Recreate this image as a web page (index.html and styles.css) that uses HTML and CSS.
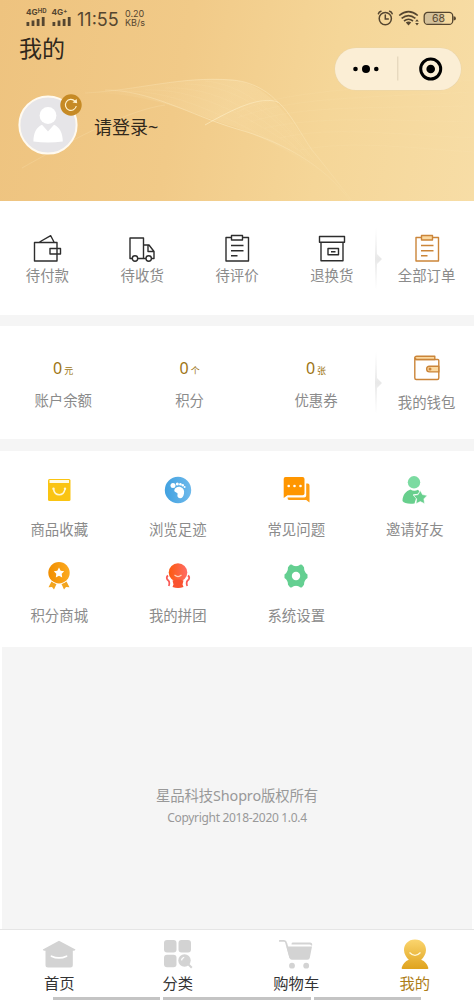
FILE: index.html
```html
<!DOCTYPE html>
<html lang="zh-CN">
<head>
<meta charset="utf-8">
<title>我的</title>
<link rel="stylesheet" href="styles.css">
</head>
<body>
<div class="app">
  <header class="hero">
    <svg class="hero-mesh" viewBox="0 0 474 201" fill="none">
      <defs>
        <linearGradient id="veil" x1="0" y1="0" x2="1" y2="0.3"><stop offset="0" stop-color="#fff0c8" stop-opacity="0"/><stop offset=".55" stop-color="#fff0c8" stop-opacity=".2"/><stop offset="1" stop-color="#fff0c8" stop-opacity="0"/></linearGradient>
        <linearGradient id="strand" gradientUnits="userSpaceOnUse" x1="70" y1="90" x2="350" y2="200"><stop stop-color="#fff3cf" stop-opacity=".2"/><stop offset=".5" stop-color="#fff3cf"/><stop offset="1" stop-color="#fff3cf" stop-opacity=".1"/></linearGradient>
      </defs>
      <path d="M85 93C140 90 180 76 232 80C270 84 290 120 312 150C322 166 336 180 350 201C310 160 270 140 235 127C190 113 150 92 85 93Z" fill="url(#veil)"/>
      <g stroke="url(#strand)" stroke-width="1">
        <path opacity=".4" d="M85 93C140 90 180 76 232 80C258 82 275 98 278 103"/>
        <path opacity=".45" d="M105 90C150 90 190 115 237 129C280 141 325 165 350 201"/>
        <path opacity=".55" d="M205 125C235 108 260 96 278 102C290 112 302 136 312 150C325 166 336 180 352 201"/>
      </g>
      <g stroke="#fff3cf" stroke-width=".7">
        <path opacity=".25" d="M22 168C80 135 130 110 165 105"/>
        <path opacity=".11" d="M120 91C170 90 210 108 290 150M145 90C190 88 240 110 298 150M165 88C215 86 260 112 305 156M185 84C230 84 270 108 309 156M205 81C245 84 280 116 314 160M237 112C280 92 340 90 474 80M237 118C290 98 350 98 474 92M250 122C300 106 360 108 474 106M265 128C320 116 380 120 474 122M280 138C330 126 390 134 474 138M300 150C350 140 410 148 474 152"/>
      </g>
    </svg>
    <div class="status">
      <div class="sim"><span class="sim-name">4G<sup>HD</sup></span><svg width="20" height="9" viewBox="0 0 20 9"><path d="M.5 5h2.800v4H.5zM5.600 3.500h2.800V9H5.600zM10.700 2h2.800v7h-2.800zM15.800 0h2.800v9h-2.800z" fill="#554630"/></svg></div>
      <div class="sim"><span class="sim-name">4G<sup>+</sup></span><svg width="20" height="9" viewBox="0 0 20 9"><path d="M.5 5h2.800v4H.5zM5.600 3.500h2.800V9H5.600zM10.700 2h2.800v7h-2.800zM15.800 0h2.800v9h-2.800z" fill="#554630"/></svg></div>
      <span class="clock">11:55</span>
      <span class="speed">0.20<br>KB/s</span>
      <svg class="status-icons" width="80" height="18" viewBox="0 0 80 18" fill="none" stroke="#554630">
        <g stroke-width="1.500" stroke-linecap="round"><circle cx="8.300" cy="9.600" r="6.100"/><path d="M8.300 6v4h3M1.400 4.700Q2 2.700 4 2.200M15.200 4.700Q14.600 2.700 12.600 2.200"/></g>
        <g stroke-width="1.600"><path d="M22.200 6.500Q31.500-1.200 40.800 6.500M24.600 9.400Q31.500 3.800 38.400 9.400M27 12Q31.500 8.600 36 12"/></g>
        <path d="M28.800 13.500Q31.500 11.700 34.200 13.500L31.500 16.500zM40 10.200l1.800 2.400h-3.600zM40 16.500l1.800-2.400h-3.600z" fill="#554630" stroke="none"/>
        <rect x="48" y="4" width="18" height="11" rx="3" fill="#d3c09a" stroke="none"/>
        <rect x="47.200" y="3.400" width="28.500" height="12" rx="3.500" stroke-width="1.300"/><path d="M76.500 7.300Q79 7.300 79 9.400T76.500 11.500z" fill="#554630" stroke="none"/>
        <text x="61.500" y="13.100" class="battery-text">68</text>
      </svg>
    </div>
    <div class="title-row">
      <h1>我的</h1>
      <div class="capsule">
        <svg width="126" height="42" viewBox="0 0 126 42"><circle cx="20.500" cy="21" r="2.300"/><circle cx="31" cy="21" r="4"/><circle cx="41.300" cy="21" r="2.300"/><path d="M62.800 8.500v24" stroke="#dfd1b6"/><circle cx="95.700" cy="21" r="10" fill="none" stroke="#000" stroke-width="3"/><circle cx="95.700" cy="21" r="4.300"/></svg>
      </div>
    </div>
    <div class="user">
      <div class="avatar">
        <svg width="60" height="60" viewBox="0 0 60 60"><circle cx="30" cy="30" r="28.600" fill="#e6e5e8" stroke="#fffaf0" stroke-width="2"/><circle cx="30" cy="20.500" r="8.400" fill="#fff"/><path d="M15.400 46.500C15.400 38 18.500 32 24 29.700L30 36.500L36 29.700C41.500 32 44.800 38 44.800 46.500Q30 48.500 15.400 46.500z" fill="#fff"/></svg>
        <svg class="refresh" width="22" height="22" viewBox="0 0 22 22"><circle cx="11" cy="11" r="10.700" fill="#c68a25"/><path d="M16.300 12A5.500 5.500 0 1 1 14.900 7.100" fill="none" stroke="#fff2cd" stroke-width="1.200"/><path d="M12.500 8.500l4.700.7L16.600 5z" fill="#fff2cd"/></svg>
      </div>
      <span class="login">请登录~</span>
    </div>
  </header>

  <section class="panel orders">
    <a class="cell"><svg class="line-icon" viewBox="0 0 30 30"><path d="M2.500 9.500h22.500v18.500h-22.500zM7.500 9L18.700 2.700L22 9M25 22.500v5.500M18 15.500h10.500v5.500H18z"/></svg><span>待付款</span></a>
    <a class="cell"><svg class="line-icon" viewBox="0 0 30 30"><path d="M5 25.500H3V5h13.500v20.500H11M16.500 12H22l5 6.500v7h-2.500M16.500 25.500H19M21 12.500v6h6"/><circle cx="8" cy="25.500" r="2.700"/><circle cx="21.700" cy="25.500" r="2.700"/></svg><span>待收货</span></a>
    <a class="cell"><svg class="line-icon" viewBox="0 0 30 30"><path d="M9 4.500H4v23.500h22.500v-23.500H21M9.500 2.500h11V7h-11zM9 12.500h12.500M9 17.700h12.500M9 22.800h6.500"/></svg><span>待评价</span></a>
    <a class="cell"><svg class="line-icon" viewBox="0 0 30 30"><path d="M2.500 3.500h25v5.700h-25zM4 9.200v18.500h22v-18.500M11 15.500h10.500v6.300H11zM14 18.700h4.500"/></svg><span>退换货</span></a>
    <a class="cell last"><svg class="divider" viewBox="0 0 8 62"><path d="M0 0h2v26l5 5-5 5v26H0z" fill="url(#edge)"/></svg><svg class="line-icon gold" viewBox="0 0 30 30"><path d="M9 4.500H4v23.500h22.500v-23.500H21M9 12.500h12.500M9 17.700h12.500M9 22.800h6.500"/><path d="M9.500 2.500h11V7h-11z" fill="#fbd9a0"/></svg><span>全部订单</span></a>
  </section>

  <section class="panel wallet">
    <a class="cell"><b>0<small>元</small></b><span>账户余额</span></a>
    <a class="cell"><b>0<small>个</small></b><span>积分</span></a>
    <a class="cell"><b>0<small>张</small></b><span>优惠券</span></a>
    <a class="cell last"><svg class="divider" viewBox="0 0 8 62"><defs><linearGradient id="edge" x1="0" y1="0" x2="0" y2="1"><stop stop-color="#eee" stop-opacity="0"/><stop offset=".5" stop-color="#e8e8e8"/><stop offset="1" stop-color="#eee" stop-opacity="0"/></linearGradient></defs><path d="M0 0h2v26l5 5-5 5v26H0z" fill="url(#edge)"/></svg><svg class="line-icon gold" viewBox="0 0 30 30"><path d="M2.800 6.500V27q0 1.500 1.500 1.500h21q1.500 0 1.500-1.500V9.500q0-1-1-1H4.500q-1.700 0-1.700-2"/><path d="M2.800 7q0-1.800 2-1.800h18v3.300H4.500z" fill="#fbd9a0"/><path d="M26.800 15.200H17.500a2.800 2.800 0 0 0 0 5.700h9.300z" fill="#fbd9a0"/><circle cx="18" cy="18" r=".8"/></svg><span>我的钱包</span></a>
  </section>

  <section class="panel services">
    <a class="cell"><svg viewBox="0 0 30 30"><rect x="4" y="4" width="22.500" height="22" rx="1.500" fill="#fac412"/><path d="M5.500 5h19.500v3H5.500z" fill="#fffbe5"/><path d="M9.500 14q1 5.800 5.700 5.800T21 14" fill="none" stroke="#fff7d5" stroke-width="1.500"/><circle cx="9.500" cy="13.700" r="1.200" fill="#fff7d5"/><circle cx="21" cy="13.700" r="1.200" fill="#fff7d5"/></svg><span>商品收藏</span></a>
    <a class="cell"><svg viewBox="0 0 30 30"><defs><linearGradient id="blue"><stop stop-color="#41a1e0"/><stop offset="1" stop-color="#6eb9eb"/></linearGradient></defs><circle cx="15" cy="15" r="13.200" fill="url(#blue)"/><g fill="#fff"><circle cx="10" cy="10.600" r="2.500"/><circle cx="14.300" cy="9" r="1.500"/><circle cx="17.400" cy="9.200" r="1.300"/><circle cx="19.800" cy="10.300" r="1.200"/><circle cx="21.600" cy="12" r="1"/><path d="M11.300 15.500C11.500 12.500 15 11.300 17.500 12C20.500 13 21.600 15.500 21 18.500C20.500 21.500 19 23.400 17 23.200C14.500 23 14 20.800 14.600 19C15 17.200 11.500 17.700 11.300 15.500z"/></g></svg><span>浏览足迹</span></a>
    <a class="cell"><svg viewBox="0 0 30 30"><path d="M4.500 2h17q2 0 2 2v14.500q0 1.700-2 1.700H6.500L2.700 23V4q0-2 1.800-2z" fill="#ff9600"/><path d="M25.200 8.500h1.500q1.800 0 1.800 2V27.500L25.200 25H8q-1.500 0-1.500-2.500h16.700q2 0 2-2z" fill="#ff9d12"/><g fill="#fff"><circle cx="7.700" cy="11" r="1.300"/><circle cx="13.500" cy="11" r="1.300"/><circle cx="19.500" cy="11" r="1.300"/></g></svg><span>常见问题</span></a>
    <a class="cell"><svg viewBox="0 0 30 30"><g fill="#68cf8d"><circle cx="14" cy="7.300" r="6.200" fill="#7bdba1"/><path d="M2.500 26C2.500 20 6 16 10.500 14.500Q14 17 18 14.700L19.500 16.500L17.800 18.800L12.800 19.500L16 23.500L14.500 28.500Q5 29.500 2.500 26z"/><path d="M20.300 15.500l2.200 4.100 4.700.8-3.300 3.500.7 4.800-4.300-2.100-4.300 2.100.7-4.800-3.300-3.500 4.700-.8z" stroke="#fff" stroke-width=".6"/></g></svg><span>邀请好友</span></a>
    <a class="cell"><svg viewBox="0 0 30 30"><defs><linearGradient id="orange"><stop stop-color="#f18e00"/><stop offset="1" stop-color="#fcaa20"/></linearGradient></defs><path d="M7.500 20.500l5 2.500-2.500 5.500-2-2.500-3.500.2zM22.500 20.500l-5 2.500 2.500 5.500 2-2.500 3.500.2z" fill="#f3a51f"/><circle cx="15" cy="11.700" r="11.300" fill="#fff"/><circle cx="15" cy="11.700" r="10.700" fill="url(#orange)"/><path d="M15 6.500l1.700 3.200 3.500.6-2.500 2.500.5 3.600-3.200-1.600-3.200 1.600.5-3.600-2.500-2.500 3.500-.6z" fill="#fff"/></svg><span>积分商城</span></a>
    <a class="cell"><svg viewBox="0 0 30 30"><defs><linearGradient id="red"><stop stop-color="#fc5a0e"/><stop offset="1" stop-color="#ff6b66"/></linearGradient></defs><circle cx="15" cy="11.500" r="9.300" fill="url(#red)"/><path d="M9.500 19.500Q15 17.500 20.500 19.500L19.500 23.500L20.500 26Q15 28 9.500 26L10.500 23.500z" fill="#fa5330"/><path d="M11.500 14Q15 17.200 18.500 14" stroke="#ffd5bd" stroke-width="1.100" fill="none"/><path d="M5 14.500Q3 16 4.200 18.500Q7.500 20.500 5.800 25M25 14.500Q27 16 25.800 18.500Q22.500 20.500 24.200 25" stroke="#fa5a56" stroke-width="1.700" fill="none"/></svg><span>我的拼团</span></a>
    <a class="cell"><svg viewBox="0 0 30 30"><g fill="#64cf91"><circle cx="15" cy="15" r="9.600"/><path d="M9 3.800Q10.700 3 12 4.500Q15 6 18 4.500Q19.300 3 21 3.800L23 6.200Q23 11 26.500 13.500V17Q23 19 23 23.800L21 26.200Q19.300 27 18 25.500Q15 24 12 25.500Q10.700 27 9 26.200L7 23.800Q7 19 3.500 17V13.500Q7 11 7 6.200z"/></g><circle cx="15" cy="15" r="4.200" fill="#fff"/></svg><span>系统设置</span></a>
  </section>

  <footer class="copyright"><p>星品科技Shopro版权所有</p><p class="version">Copyright 2018-2020 1.0.4</p></footer>

  <nav class="tabs">
    <a class="tab"><svg viewBox="0 0 34 30"><path d="M17 .8L33.500 9.500Q33 11 30.800 10.700V25q0 2.500-2.500 2.500H6q-2.500 0-2.500-2.500V10.700Q1 11 .8 9.500z" fill="#d3d3d3"/><path d="M9.500 16.200q7.500 3.500 15 0" stroke="#fff" stroke-width="1.800" stroke-linecap="round" fill="none"/></svg><span>首页</span></a>
    <a class="tab"><svg viewBox="0 0 34 30"><g fill="#d3d3d3"><rect x="3" width="12.500" height="12.500" rx="3"/><rect x="17.500" width="12.500" height="12.500" rx="3"/><rect x="3" y="14.800" width="12.500" height="12.500" rx="3"/><circle cx="23.500" cy="20.500" r="6.200"/></g><path d="M27.500 24.500l3.300 3.300" stroke="#d3d3d3" stroke-width="2"/><path d="M20.500 20.300q.3-2.500 2.700-3" stroke="#fff" stroke-width="1.300" fill="none"/></svg><span>分类</span></a>
    <a class="tab"><svg viewBox="0 0 34 30"><path d="M.8.9H5q1.700 0 2.200 2l4 14.500" fill="none" stroke="#d3d3d3" stroke-width="1.800" stroke-linecap="round"/><path d="M7.500 6.500H33L30.800 17.700q-.3 2-2.500 2H13q-2 0-2.500-2zM13.500 2.500H31q2.500 0 2.200 3H32q0-1-1.500-1H12.500q0-2 1-2z" fill="#d3d3d3"/><circle cx="13" cy="25.700" r="2.900" fill="#d3d3d3"/><circle cx="27.200" cy="25.700" r="2.900" fill="#d3d3d3"/></svg><span>购物车</span></a>
    <a class="tab active"><svg viewBox="0 0 34 30"><defs><linearGradient id="gold" x1="0" y1="0" x2="0" y2="1"><stop stop-color="#fbd56e"/><stop offset="1" stop-color="#dfa31e"/></linearGradient></defs><path d="M17-.5C24-.5 28 4.500 28 10.200C28 14 25.500 17.500 23.200 19.800Q28.700 22 30.400 28Q30.400 28.900 29.400 28.900H4.600Q3.600 28.900 3.600 28Q5.300 22 10.800 19.800C8.500 17.500 6 14 6 10.200C6 4.500 10-.5 17-.5z" fill="url(#gold)"/><path d="M11.500 12.500q5.500 5.700 11 0" stroke="#fff8d8" stroke-width="1.300" fill="none"/></svg><span>我的</span></a>
    <div class="gesture"><i></i><i></i><i></i></div>
  </nav>
</div>
</body>
</html>
```
FILE: styles.css
```css
* { box-sizing: border-box; }
body {
  margin: 0;
  background: #fff;
  font-family: "Noto Sans", "Noto Sans CJK SC", sans-serif;
  color: #8b8b8b;
}
svg { display: block; overflow: visible; }
.app { width: 474px; height: 1000px; display: flex; flex-direction: column; overflow: hidden; }
.hero {
  position: relative;
  height: 201px;
  flex: none;
  background: linear-gradient(100deg, #eec37f 0%, #f1ca88 38%, #f5d698 68%, #f7dda6 100%);
}
.hero-mesh { position: absolute; inset: 0; width: 474px; height: 201px; }
.status {
  position: relative;
  display: flex;
  height: 32px;
  padding: 9px 26px 0;
  color: #554630;
}
.sim { width: 25.500px; flex: none; font-family: Inter, sans-serif; }
.sim-name { display: block; height: 8px; font-size: 8.200px; line-height: 7px; font-weight: 700; white-space: nowrap; }
.sim-name sup { font-size: 6px; line-height: 0; vertical-align: 2px; }
.clock { width: 48px; font: 18px/21px Inter, sans-serif; white-space: nowrap; }
.speed { font: 9px/8.700px Inter, sans-serif; padding-top: 1px; }
.status-icons { margin-left: auto; margin-right: -9px; }
.battery-text { font: 10.500px Inter, sans-serif; fill: #554630; stroke: none; text-anchor: middle; }
.title-row { position: relative; display: flex; justify-content: space-between; height: 62px; padding: 0 13px 0 19px; }
h1 { margin: 0; font-size: 23px; line-height: 32px; font-weight: 400; color: #30281c; }
.capsule { width: 126px; height: 42px; margin-top: 15.500px; border-radius: 21px; background: #fbeed5; box-shadow: 0 0 0 .5px #ead5aa; }
.user { position: relative; display: flex; align-items: center; padding-left: 18px; gap: 16px; height: 62px; }
.avatar { position: relative; width: 60px; height: 60px; }
.refresh { position: absolute; left: 42px; top: -1px; }
.login { font-size: 18px; line-height: 26px; color: #30281c; padding-top: 4px; }
.panel { display: flex; flex: none; background: #fff; font-size: 14.400px; line-height: 20px; }
.cell { display: flex; flex-direction: column; align-items: center; white-space: nowrap; }
.orders { height: 113.500px; padding-top: 32px; }
.orders .cell { width: 20%; gap: 3px; }
.line-icon { width: 30px; height: 30px; fill: none; stroke: #2d2d2d; stroke-width: 1.400; stroke-linejoin: round; }
.line-icon.gold { stroke: #cb8539; }
.cell.last { position: relative; }
.divider { position: absolute; left: -4px; top: -5px; width: 8px; height: 62px; }
.wallet { height: 124.500px; padding-top: 31px; border-top: 11.500px solid #f5f5f5; }
.wallet .cell { width: 126.400px; }
.wallet .cell.last { width: 94.800px; }
.wallet b { font-weight: 400; font-size: 16px; line-height: 22px; margin-bottom: 9px; color: #9d7413; }
.wallet small { font-size: 9px; margin-left: 2px; }
.wallet .last span { margin-top: 12.500px; }
.wallet .last .line-icon { margin-top: -6px; }
.services { display: grid; grid-template-columns: repeat(4, 1fr); grid-auto-rows: 85.500px; height: 208px; padding-top: 24px; border-top: 12px solid #f5f5f5; }
.services .cell { gap: 15px; }
.services svg { width: 30px; height: 30px; }
.copyright { flex: 1; margin: 0 2px; padding-top: 138px; background: #f5f5f5; text-align: center; color: #999; }
.copyright p { margin: 0; font-size: 14.400px; line-height: 22px; letter-spacing: -.12px; }
.copyright .version { font-size: 12px; letter-spacing: -.31px; }
.tabs { position: relative; display: flex; flex: none; height: 71px; padding-top: 10px; border-top: 1px solid #e5e5e5; background: #fff; }
.tab { width: 25%; display: flex; flex-direction: column; align-items: center; gap: 2px; color: #333; font-size: 15.300px; line-height: 22px; }
.tab svg { width: 34px; height: 30px; }
.tab.active { color: #ad7d18; }
.gesture { position: absolute; left: 53px; bottom: 0; display: flex; gap: 3px; }
.gesture i { width: 107px; height: 3px; background: #c4c4c4; }
.gesture i:nth-child(2) { width: 148px; }
```
